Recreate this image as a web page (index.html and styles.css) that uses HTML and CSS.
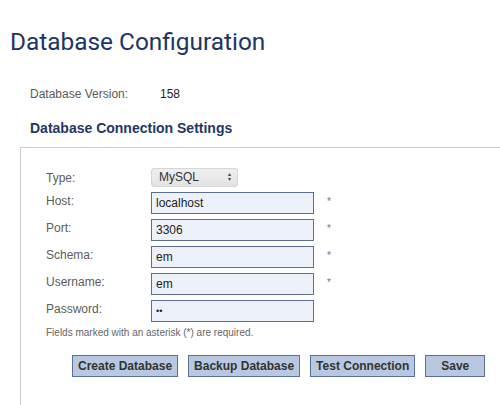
FILE: index.html
```html
<!DOCTYPE html>
<html>
<head>
<meta charset="utf-8">
<link rel="stylesheet" href="styles.css">
</head>
<body>
<h1 class="title">Database Configuration</h1>
<div class="version">
  <span class="version-label">Database Version:</span>
  <span class="version-value">158</span>
</div>
<h2 class="section-title">Database Connection Settings</h2>
<div class="panel">
  <div class="row row-type">
    <label class="label">Type:</label>
    <div class="select">MySQL<span class="arrows">▴<br>▾</span></div>
  </div>
  <div class="row">
    <label class="label">Host:</label>
    <div class="input">localhost</div>
    <span class="req">*</span>
  </div>
  <div class="row">
    <label class="label">Port:</label>
    <div class="input">3306</div>
    <span class="req">*</span>
  </div>
  <div class="row">
    <label class="label">Schema:</label>
    <div class="input">em</div>
    <span class="req">*</span>
  </div>
  <div class="row">
    <label class="label">Username:</label>
    <div class="input">em</div>
    <span class="req">*</span>
  </div>
  <div class="row">
    <label class="label">Password:</label>
    <div class="input password">••</div>
  </div>
  <p class="note">Fields marked with an asterisk (*) are required.</p>
  <div class="buttons">
    <button class="btn">Create Database</button>
    <button class="btn">Backup Database</button>
    <button class="btn">Test Connection</button>
    <button class="btn btn-save">Save</button>
  </div>
</div>
</body>
</html>
```

FILE: styles.css
```css
html, body {
  margin: 0;
  padding: 0;
  overflow: hidden;
  background: #ffffff;
}
body {
  font-family: "Liberation Sans", Arial, sans-serif;
  width: 500px;
  height: 405px;
}
.title {
  font-family: Roboto, "Liberation Sans", sans-serif;
  font-weight: 400;
  font-size: 24.4px;
  line-height: 30px;
  color: #1c3566;
  margin: 0;
  padding: 27px 0 0 10px;
}
.version {
  display: flex;
  margin: 30px 0 0 30px;
  font-size: 12px;
  line-height: 14px;
}
.version-label {
  color: #5a5a5a;
  width: 130px;
}
.version-value {
  color: #222;
}
.section-title {
  margin: 19px 0 0 30px;
  font-size: 14px;
  line-height: 16px;
  font-weight: bold;
  color: #1f3766;
}
.panel {
  margin: 11px 0 0 20px;
  border-top: 1px solid #c9cdd2;
  border-left: 1px solid #c9cdd2;
  padding: 20px 0 40px 25px;
}
.row {
  display: flex;
  align-items: flex-start;
  height: 22px;
  margin-bottom: 5px;
}
.row-type {
  height: 19px;
}
.label {
  width: 105px;
  font-size: 12px;
  line-height: 14px;
  color: #5c5c5c;
  padding-top: 2px;
}
.row-type .label {
  padding-top: 3px;
}
.select {
  position: relative;
  width: 87px;
  height: 19px;
  box-sizing: border-box;
  padding-left: 8px;
  border-radius: 4px;
  background: linear-gradient(#f0f0f0, #e2e2e2);
  box-shadow: inset 0 0 0 1px #d6d6d6;
  font-size: 12px;
  line-height: 19px;
  color: #333;
}
.arrows {
  position: absolute;
  right: 7px;
  top: 4px;
  font-size: 6px;
  line-height: 5px;
  color: #444;
}
.input {
  width: 163px;
  height: 22px;
  box-sizing: border-box;
  border: 1px solid #5b6f96;
  background: #edf1f9;
  padding-left: 4px;
  font-size: 12px;
  line-height: 20px;
  color: #222;
}
.password {
  font-size: 9px;
}
.req {
  margin-left: 13px;
  font-size: 10px;
  line-height: 20px;
  color: #777;
}
.note {
  margin: 3px 0 0 0;
  font-size: 10px;
  line-height: 12px;
  color: #666;
}
.buttons {
  display: flex;
  gap: 10px;
  margin: 16px 0 0 26px;
}
.btn {
  font-family: "Liberation Sans", Arial, sans-serif;
  font-weight: bold;
  font-size: 12px;
  color: #333;
  background: #b8c8e0;
  border: 1px solid #58709a;
  height: 22px;
  padding: 0 5px;
  margin: 0;
  border-radius: 0;
}
.btn-save {
  min-width: 60px;
}
```
